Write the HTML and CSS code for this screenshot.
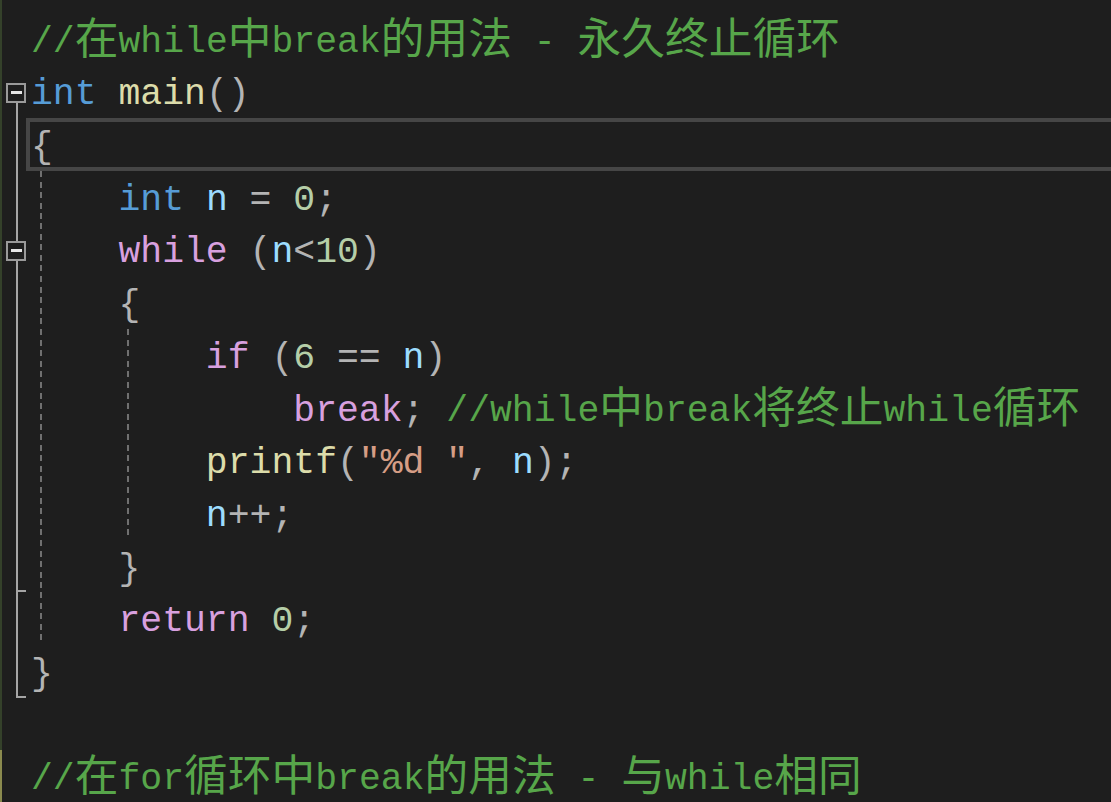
FILE: index.html
```html
<!DOCTYPE html>
<html lang="zh-CN">
<head>
<meta charset="utf-8">
<title>break</title>
<link rel="stylesheet" href="styles.css">
</head>
<body>
<div class="editor">
  <div class="ln"><div class="gut"></div><div class="code"><span class="c">//<span class="cj">在</span>while<span class="cj">中</span>break<span class="cj">的用法</span> - <span class="cj">永久终止循环</span></span></div></div>
  <div class="ln"><div class="gut g-box"><span class="fold"></span></div><div class="code"><span class="kw">int</span> <span class="fn">main</span><span class="p">()</span></div></div>
  <div class="ln"><div class="gut g-line"></div><div class="code cur"><span class="p">{</span></div></div>
  <div class="ln"><div class="gut g-line"></div><div class="code g1">    <span class="kw">int</span> <span class="v">n</span> <span class="p">=</span> <span class="num">0</span><span class="p">;</span></div></div>
  <div class="ln"><div class="gut g-line g-mid"><span class="fold"></span></div><div class="code g1">    <span class="ctl">while</span> <span class="p">(</span><span class="v">n</span><span class="p">&lt;</span><span class="num">10</span><span class="p">)</span></div></div>
  <div class="ln"><div class="gut g-line"></div><div class="code g1">    <span class="p">{</span></div></div>
  <div class="ln"><div class="gut g-line"></div><div class="code g1 g2">        <span class="ctl">if</span> <span class="p">(</span><span class="num">6</span> <span class="p">==</span> <span class="v">n</span><span class="p">)</span></div></div>
  <div class="ln"><div class="gut g-line"></div><div class="code g1 g2">            <span class="ctl">break</span><span class="p">;</span> <span class="c">//while<span class="cj">中</span>break<span class="cj">将终止</span>while<span class="cj">循环</span></span></div></div>
  <div class="ln"><div class="gut g-line"></div><div class="code g1 g2">        <span class="fn">printf</span><span class="p">(</span><span class="str">"%d "</span><span class="p">,</span> <span class="v">n</span><span class="p">);</span></div></div>
  <div class="ln"><div class="gut g-line"></div><div class="code g1 g2">        <span class="v">n</span><span class="p">++;</span></div></div>
  <div class="ln"><div class="gut g-line g-end"></div><div class="code g1">    <span class="p">}</span></div></div>
  <div class="ln"><div class="gut g-line"></div><div class="code g1">    <span class="ctl">return</span> <span class="num">0</span><span class="p">;</span></div></div>
  <div class="ln"><div class="gut g-line g-end"></div><div class="code"><span class="p">}</span></div></div>
  <div class="ln"><div class="gut"></div><div class="code"></div></div>
  <div class="ln"><div class="gut changed"></div><div class="code"><span class="c">//<span class="cj">在</span>for<span class="cj">循环中</span>break<span class="cj">的用法</span> - <span class="cj">与</span>while<span class="cj">相同</span></span></div></div>
</div>
</body>
</html>
```
FILE: styles.css
```css
html, body {
  margin: 0;
  padding: 0;
  background: #1e1e1e;
  overflow: hidden;
}

.editor {
  width: 1140px;
  height: 802px;
  box-sizing: border-box;
  padding-top: 12.7px;
  border-left: 2px solid #34412a;
  background: #1e1e1e;
  font-family: "Liberation Mono", "DejaVu Sans Mono", monospace;
  font-size: 36.43px;
  color: #dcdcdc;
}

.ln {
  display: flex;
  height: 52.7px;
}

.gut {
  width: 24px;
  flex: none;
  display: flex;
  align-items: center;
  box-sizing: border-box;
  padding-top: 2px;
}

.gut.changed {
  margin-left: -2px;
  width: 26px;
  border-left: 2px solid #8a8a4e;
}

.g-line {
  background: linear-gradient(#a5a5a5, #a5a5a5) 14px 0 / 2px 100% no-repeat;
}

.g-box {
  background: linear-gradient(#a5a5a5, #a5a5a5) 14px 100% / 2px 50% no-repeat;
}

.g-end {
  background:
    linear-gradient(#a5a5a5, #a5a5a5) 14px 0 / 2px 100% no-repeat,
    linear-gradient(#a5a5a5, #a5a5a5) 14px 100% / 10px 2px no-repeat;
}

.fold {
  margin-left: 4px;
  width: 20px;
  height: 20px;
  box-sizing: border-box;
  border: 2px solid #9a9a9a;
  background: #1e1e1e;
  display: flex;
  align-items: center;
  justify-content: center;
}

.fold::after {
  content: "";
  width: 11px;
  height: 3px;
  background: #e6e6e6;
}

.code {
  flex: 1;
  min-width: 0;
  height: 52.7px;
  box-sizing: border-box;
  padding-left: 5px;
  line-height: 60.6px;
  white-space: pre;
}

.code.cur {
  box-shadow: inset 0 0 0 4px #464646;
}

.code.g1 {
  background: repeating-linear-gradient(to bottom, #707070 0 6px, transparent 6px 10.54px) 14px 0 / 2px 100% no-repeat;
}

.code.g1.g2 {
  background:
    repeating-linear-gradient(to bottom, #707070 0 6px, transparent 6px 10.54px) 14px 0 / 2px 100% no-repeat,
    repeating-linear-gradient(to bottom, #707070 0 6px, transparent 6px 10.54px) 101px 0 / 2px 100% no-repeat;
}

.cj {
  font-family: "Noto Sans CJK SC", "Noto Sans CJK TC", sans-serif;
  font-size: 43.72px;
  line-height: 0;
  vertical-align: -2px;
}

.c { color: #57a64a; }
.kw { color: #569cd6; }
.fn { color: #dcdcaa; }
.ctl { color: #d8a0df; }
.v { color: #9cdcfe; }
.num { color: #b5cea8; }
.str { color: #d69d85; }
.p { color: #b4b4b4; }
```
